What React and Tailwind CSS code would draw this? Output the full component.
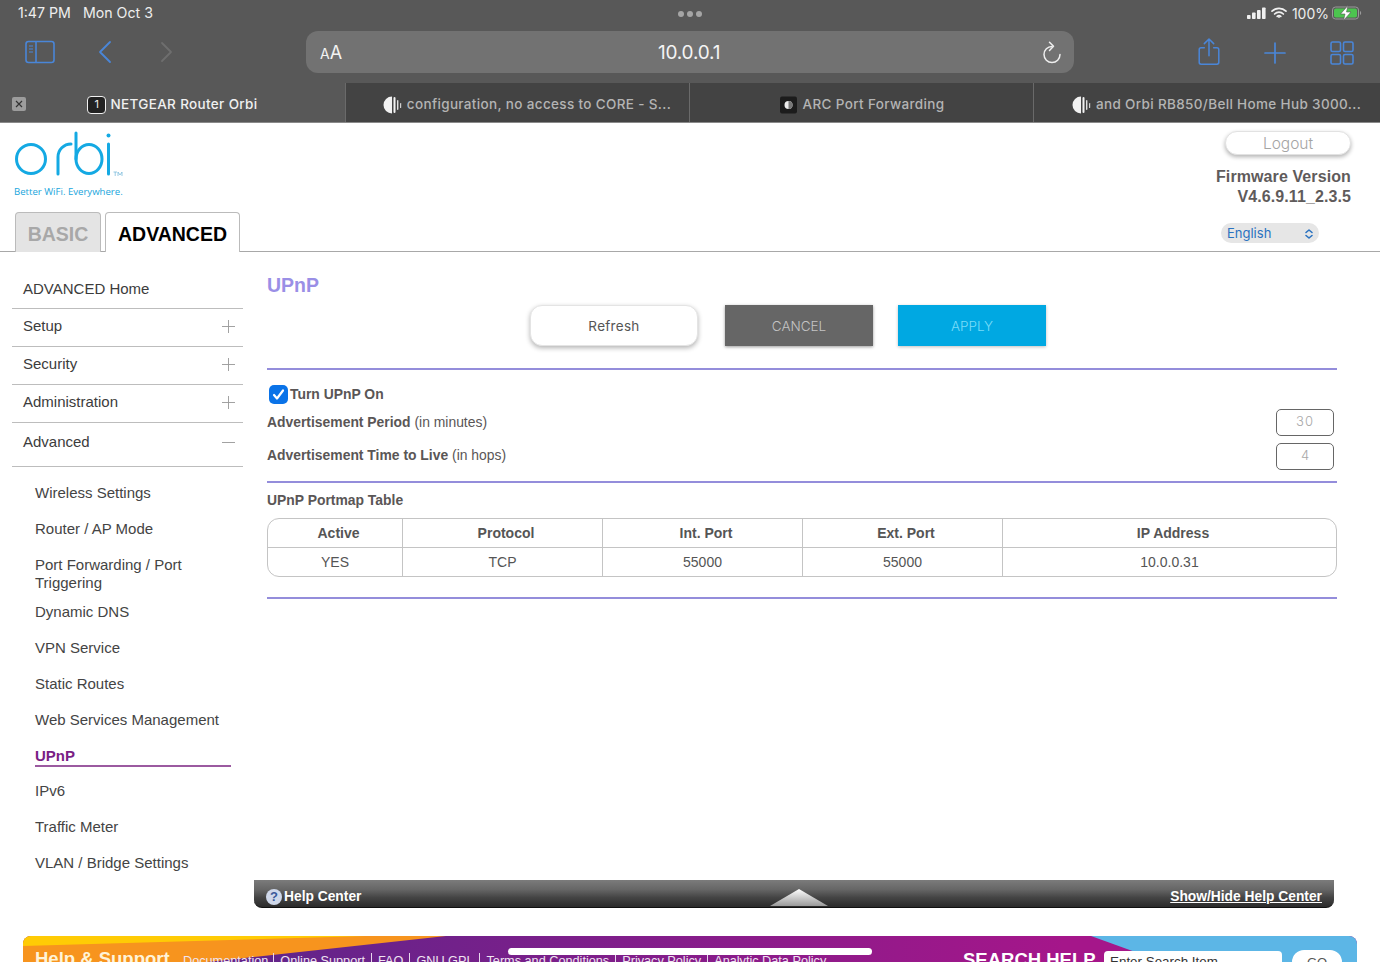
import React from "react";

const blue = "#4a86d8";

function Tab({ icon, children, active, shift, last }) {
  return (
    <div className={`flex items-center justify-center gap-[3px] h-full text-[13.5px] tracking-[0.35px] font-medium pt-[4px] ${last ? "flex-1" : active ? "w-[345px]" : "w-[344px]"} ${shift ? "pl-[19px]" : ""} ${active ? "text-[#f0f0f0]" : "bg-[#434343] text-[#b4b4b4] border-l border-[#6a6a6a]"}`}>
      {icon}
      <span className="whitespace-nowrap">{children}</span>
    </div>
  );
}

const Wave = () => (
  <svg width="21" height="18" viewBox="0 0 21 18" className="shrink-0">
    <path d="M9 0.5a8.5 8.5 0 0 0 0 17z" fill="#f2f2f2" />
    <rect x="10.5" y="1" width="2" height="16" rx="1" fill="#f2f2f2" />
    <rect x="14" y="4" width="1.4" height="10" rx="0.7" fill="#e0e0e0" />
    <rect x="17" y="7" width="1.2" height="5" rx="0.6" fill="#cfcfcf" />
  </svg>
);

function Chrome() {
  return (
    <div className="h-[123px] bg-[#585858] flex flex-col border-b border-[#8a8a8a] font-['Inter',sans-serif]">
      <div className="h-[26px] flex items-center justify-between pl-[18px] pr-[18px] text-[14.2px] text-[#eeeeee] relative">
        <div className="flex gap-[12px]"><span>1:47 PM</span><span>Mon Oct 3</span></div>
        <div className="flex gap-[3px] absolute left-[678px] top-[11px]">
          <span className="w-[6px] h-[6px] rounded-full bg-[#a5a5a5]" />
          <span className="w-[6px] h-[6px] rounded-full bg-[#a5a5a5]" />
          <span className="w-[6px] h-[6px] rounded-full bg-[#a5a5a5]" />
        </div>
        <div className="flex items-center gap-[4px]">
          <svg width="20" height="12" viewBox="0 0 20 12">
            <rect x="0" y="8" width="3.6" height="4" rx="0.8" fill="#f0f0f0" />
            <rect x="5" y="5.5" width="3.6" height="6.5" rx="0.8" fill="#f0f0f0" />
            <rect x="10" y="3" width="3.6" height="9" rx="0.8" fill="#f0f0f0" />
            <rect x="15" y="0.5" width="3.6" height="11.5" rx="0.8" fill="#f0f0f0" />
          </svg>
          <svg width="16" height="12" viewBox="0 0 16 12" fill="none" stroke="#f0f0f0" strokeWidth="1.7" strokeLinecap="round">
            <path d="M1 4.2a10 10 0 0 1 14 0" />
            <path d="M3.6 7a6.2 6.2 0 0 1 8.8 0" />
            <circle cx="8" cy="10" r="0.9" fill="#f0f0f0" stroke="none" />
            <path d="M6.2 9.4a2.6 2.6 0 0 1 3.6 0" />
          </svg>
          <span className="text-[14px] ml-[1px]">100%</span>
          <svg width="30" height="16" viewBox="0 0 30 16" className="ml-[-1px]">
            <rect x="0.5" y="2" width="26" height="12" rx="3" fill="none" stroke="#9a9a9a" />
            <rect x="2" y="3.5" width="23" height="9" rx="1.8" fill="#4cc44f" />
            <path d="M28 6v4a2 2 0 0 0 1.2-2 2 2 0 0 0-1.2-2z" fill="#9a9a9a" />
            <path d="M16 0.5L8.5 9h4.5l-1.5 6.5L19 7h-4.5z" fill="#ffffff" stroke="#585858" strokeWidth="0.6" />
          </svg>
        </div>
      </div>
      <div className="h-[57px] flex items-center relative">
        <div className="w-[306px] flex items-center mt-[-5px]">
          <svg width="30" height="24" viewBox="0 0 30 24" fill="none" stroke={blue} strokeWidth="1.6" className="ml-[25px]">
            <rect x="1" y="1.5" width="28" height="21" rx="2.5" />
            <path d="M11 1.5v21" />
            <path d="M4 6h4M4 9h4M4 12h4" strokeWidth="1.2" />
          </svg>
          <svg width="14" height="24" viewBox="0 0 14 24" fill="none" stroke={blue} strokeWidth="1.8" strokeLinecap="round" strokeLinejoin="round" className="ml-[43px]">
            <path d="M12 2L2 12l10 10" />
          </svg>
          <svg width="14" height="24" viewBox="0 0 14 24" fill="none" stroke="#6e6e6e" strokeWidth="1.8" strokeLinecap="round" strokeLinejoin="round" className="ml-[47px]">
            <path d="M3 3l9 9-9 9" />
          </svg>
        </div>
        <div className="w-[768px] h-[42px] mt-[-6px] rounded-[12px] bg-[#727272] flex items-center justify-between pl-[14px] pr-[12px]">
          <span className="text-[#f2f2f2] leading-none mt-[3px]"><span className="text-[14px]">A</span><span className="text-[18px]">A</span></span>
          <span className="text-[#f4f4f4] text-[19px] absolute left-[658px] mt-[3px] tracking-[-0.2px]">10.0.0.1</span>
          <svg width="20" height="24" viewBox="0 0 20 24" fill="none" stroke="#eeeeee" strokeWidth="1.5" strokeLinecap="round" strokeLinejoin="round">
            <path d="M10 6.5a8 8 0 1 0 8 8" />
            <path d="M7.5 2.2L11.5 6.3 7.5 10.4" />
          </svg>
        </div>
        <div className="flex items-center mt-[-4px]">
          <svg width="24" height="28" viewBox="0 0 24 30" fill="none" stroke={blue} strokeWidth="1.6" strokeLinecap="round" strokeLinejoin="round" className="ml-[123px] mt-[-1px]">
            <path d="M7 10.5H3.5a2 2 0 0 0-2 2V26a2 2 0 0 0 2 2h17a2 2 0 0 0 2-2V12.5a2 2 0 0 0-2-2H17" />
            <path d="M12 19V1.5M7 6l5-5 5 5" />
          </svg>
          <svg width="22" height="22" viewBox="0 0 22 22" fill="none" stroke={blue} strokeWidth="1.7" strokeLinecap="round" className="ml-[43px]">
            <path d="M11 1v20M1 11h20" />
          </svg>
          <svg width="24" height="24" viewBox="0 0 24 24" fill="none" stroke={blue} strokeWidth="1.6" className="ml-[44px]">
            <rect x="1" y="1" width="9.5" height="9.5" rx="1.5" />
            <rect x="13.5" y="1" width="9.5" height="9.5" rx="1.5" />
            <rect x="1" y="13.5" width="9.5" height="9.5" rx="1.5" />
            <rect x="13.5" y="13.5" width="9.5" height="9.5" rx="1.5" />
          </svg>
        </div>
      </div>
      <div className="flex-1 flex relative">
        <div className="absolute left-[12px] top-[14px] w-[14px] h-[14px] rounded-[2px] bg-[#9c9c9c] flex items-center justify-center">
          <svg width="8" height="8" viewBox="0 0 8 8" stroke="#333" strokeWidth="1.2"><path d="M1 1l6 6M7 1L1 7" /></svg>
        </div>
        <Tab active icon={<span className="w-[19px] h-[18px] rounded-[4px] border-[1.5px] border-[#f0f0f0] bg-[#222] text-[11px] flex items-center justify-center font-normal mr-[1px]">1</span>}>NETGEAR Router Orbi</Tab>
        <Tab shift icon={<Wave />}>configuration, no access to CORE - S...</Tab>
        <Tab icon={
          <svg width="20" height="18" viewBox="0 0 20 18" className="mr-[1px]">
            <rect x="1" y="0.5" width="17" height="17" rx="2" fill="#1c1c1c" />
            <circle cx="9.5" cy="9" r="4" fill="#eee" />
            <path d="M9.5 5a4 4 0 0 1 0 8z" fill="#777" />
          </svg>
        }>ARC Port Forwarding</Tab>
        <Tab last shift icon={<Wave />}>and Orbi RB850/Bell Home Hub 3000...</Tab>
      </div>
    </div>
  );
}

function Header() {
  return (
    <div className="h-[129px] border-b border-[#a8a8a8] flex justify-between font-['Liberation_Sans',sans-serif]">
      <div className="flex flex-col pl-[14px]">
        <svg width="112" height="54" viewBox="0 0 112 54" fill="none" stroke="#14a9e3" strokeWidth="3" className="mt-[7px]">
          <circle cx="17" cy="29" r="14.5" />
          <path d="M44 44V27a13 13 0 0 1 13-13" strokeLinecap="round" />
          <ellipse cx="75" cy="29" rx="13" ry="14.5" />
          <path d="M62 3v26" strokeLinecap="round" />
          <path d="M94.5 14v30" strokeLinecap="round" />
          <circle cx="94.5" cy="5.5" r="2" fill="#14a9e3" stroke="none" />
          <path d="M99.5 42h3.5M101.2 42v4M104 46v-4l2 3 2-3v4" strokeWidth="0.7" stroke="#6fb5d8" />
        </svg>
        <div className="text-[9.6px] text-[#20a5dc] mt-[1px] leading-[14px] font-['Open_Sans',sans-serif]">Better WiFi. Everywhere.</div>
        <div className="flex gap-[4px] mt-auto items-end mb-[-1px]">
          <div className="w-[86px] h-[40px] ml-[1px] pt-[4px] rounded-t-[4px] border border-b-0 border-[#bbbbbb] bg-[#e4e4e4] text-[#a8a8a8] text-[19.5px] font-bold flex items-center justify-center">BASIC</div>
          <div className="w-[135px] h-[40px] pt-[4px] rounded-t-[4px] border border-b-0 border-[#bbbbbb] bg-white text-[#000] text-[19.5px] font-bold flex items-center justify-center relative z-10">ADVANCED</div>
        </div>
      </div>
      <div className="flex flex-col items-end pr-[29px]">
        <div className="mt-[8px] pt-[2px] w-[126px] h-[24px] rounded-full bg-white border border-[#e2e2e2] shadow-[0_2px_4px_rgba(0,0,0,0.3)] text-[#a4a4a4] text-[15.5px] flex items-center justify-center font-['Inter',sans-serif] font-light">Logout</div>
        <div className="text-[#5f5b5b] text-[16px] tracking-[0.1px] font-bold text-right leading-[20px] mt-[12px]">
          <div>Firmware Version</div>
          <div>V4.6.9.11_2.3.5</div>
        </div>
        <div className="w-[98px] h-[20px] pt-[1px] mt-[16px] mr-[32px] rounded-full bg-[#e6e6e6] text-[#2a72c0] text-[13px] flex items-center justify-between pl-[6px] pr-[5px] font-['Inter',sans-serif]">
          <span>English</span>
          <svg width="10" height="12" viewBox="0 0 10 12" fill="none" stroke="#2a72c0" strokeWidth="1.6" strokeLinecap="round" strokeLinejoin="round">
            <path d="M2 4.5L5 2l3 2.5M2 7.5L5 10l3-2.5" />
          </svg>
        </div>
      </div>
    </div>
  );
}

function Plus({ minus }) {
  return (
    <svg width="13" height="13" viewBox="0 0 14 14" stroke="#9a9a9a" strokeWidth="1">
      <path d="M0 7h14" />
      {!minus && <path d="M7 0v14" />}
    </svg>
  );
}

function Top({ label, h, minus, icon = true, pb = 2 }) {
  return (
    <div style={{ height: h, paddingBottom: pb }} className="flex items-center justify-between border-b border-[#bdbdbd] pl-[11px] pr-[8px] text-[15px] text-[#3c3c3c]">
      <span>{label}</span>
      {icon && <Plus minus={minus} />}
    </div>
  );
}

function Sidebar() {
  const subs = ["Wireless Settings", "Router / AP Mode"];
  const subs2 = ["Dynamic DNS", "VPN Service", "Static Routes", "Web Services Management"];
  const subs3 = ["IPv6", "Traffic Meter", "VLAN / Bridge Settings"];
  const Sub = ({ t }) => <div className="h-[36px] flex items-center">{t}</div>;
  return (
    <div className="w-[243px] ml-[12px] shrink-0 font-['Liberation_Sans',sans-serif]">
      <div className="h-[20px]" />
      <div className="w-[231px]">
        <Top label="ADVANCED Home" h={37} icon={false} pb={1} />
        <Top label="Setup" h={38} />
        <Top label="Security" h={38} />
        <Top label="Administration" h={38} />
        <Top label="Advanced" h={44} minus pb={4} />
      </div>
      <div className="pl-[23px] pt-[8px] text-[15px] text-[#444444]">
        {subs.map((t) => <Sub key={t} t={t} />)}
        <div className="leading-[18px] pt-[9px] pb-[2px] w-[190px]">Port Forwarding / Port Triggering</div>
        {subs2.map((t) => <Sub key={t} t={t} />)}
        <div className="h-[35px] flex items-start">
          <div className="w-[196px] h-[29px] border-b-2 border-[#9b5aa0] text-[#7a1e85] font-bold flex items-center pt-[10px]">UPnP</div>
        </div>
        {subs3.map((t) => <Sub key={t} t={t} />)}
      </div>
    </div>
  );
}

const Divider = () => <div className="h-[2px] bg-[#948ddb]" />;

function Main() {
  const head = ["Active", "Protocol", "Int. Port", "Ext. Port", "IP Address"];
  const row = ["YES", "TCP", "55000", "55000", "10.0.0.31"];
  return (
    <div className="flex-1 ml-[12px] mr-[43px] font-['Liberation_Sans',sans-serif]">
      <div className="text-[#9a8fe6] text-[19.5px] font-bold leading-[24px] mt-[21px]">UPnP</div>
      <div className="flex mt-[8px] ml-[263px] h-[41px] font-['Inter',sans-serif] text-[13.5px]">
        <div className="w-[168px] pt-[1px] rounded-[12px] bg-white border border-[#e4e4e4] shadow-[0_2px_5px_rgba(0,0,0,0.3)] text-[#555] flex items-center justify-center tracking-[0.3px]">Refresh</div>
        <div className="w-[148px] pt-[1px] ml-[27px] bg-[#666666] shadow-[0_1px_3px_rgba(0,0,0,0.4)] text-[#c4c4c4] font-light flex items-center justify-center">CANCEL</div>
        <div className="w-[148px] pt-[1px] ml-[25px] bg-[#00a8e2] shadow-[0_1px_3px_rgba(0,0,0,0.25)] text-[#7adcf8] font-light flex items-center justify-center">APPLY</div>
      </div>
      <div className="mt-[22px]"><Divider /></div>
      <div className="h-[111px] relative text-[13.9px] text-[#5a5656]">
        <div className="flex items-center pt-[13px] h-[36px]">
          <span className="ml-[2px] w-[19px] h-[19px] rounded-[5px] bg-[#0a73e8] flex items-center justify-center">
            <svg width="13" height="13" viewBox="0 0 13 13" fill="none" stroke="#fff" strokeWidth="2.2" strokeLinecap="round" strokeLinejoin="round"><path d="M2 7l3 3.5L11 2.5" /></svg>
          </span>
          <span className="font-bold ml-[2px]">Turn UPnP On</span>
        </div>
        <div className="flex items-center justify-between h-[30px] pr-[3px] mt-[1px]">
          <span><b>Advertisement Period</b> (in minutes)</span>
          <span className="w-[58px] h-[27px] rounded-[5px] border border-[#666] flex items-center justify-center text-[#a8a8a8] text-[13px] font-['Inter',sans-serif] font-light tracking-[1px]">30</span>
        </div>
        <div className="flex items-center justify-between h-[38px] pr-[3px]">
          <span className="mb-[1px]"><b>Advertisement Time to Live</b> (in hops)</span>
          <span className="w-[58px] h-[27px] rounded-[5px] border border-[#666] flex items-center justify-center text-[#a8a8a8] text-[13px] font-['Inter',sans-serif] font-light">4</span>
        </div>
      </div>
      <Divider />
      <div className="text-[13.9px] font-bold text-[#5a5656] leading-[18px] mt-[8px]">UPnP Portmap Table</div>
      <div className="mt-[9px] border border-[#c4c4c4] rounded-[12px] overflow-hidden grid grid-cols-[135px_200px_200px_200px_1fr] text-[14px] text-[#555]">
        {head.map((h, i) => (
          <div key={h} className={`h-[29px] pl-[7px] flex items-center justify-center font-bold border-b border-[#c4c4c4] ${i < 4 ? "border-r" : ""}`}>{h}</div>
        ))}
        {row.map((r, i) => (
          <div key={i} className={`h-[28px] flex items-center justify-center border-[#c4c4c4] ${i < 4 ? "border-r" : ""}`}>{r}</div>
        ))}
      </div>
      <div className="mt-[20px]"><Divider /></div>
    </div>
  );
}

function HelpBar() {
  return (
    <div className="ml-[254px] mr-[46px] h-[28px] pt-[7px] rounded-b-[8px] border-b border-[#111] bg-[linear-gradient(#7b7b7b,#666_35%,#444_65%,#2b2b2b)] flex items-center justify-between pl-[12px] pr-[12px] relative font-['Liberation_Sans',sans-serif] text-[13.8px] font-bold text-white">
      <div className="flex items-center gap-[2px]">
        <span className="w-[16px] h-[16px] rounded-full bg-[#cfd8ea] text-[#3a5a9a] text-[13px] flex items-center justify-center">?</span>
        <span>Help Center</span>
      </div>
      <svg width="58" height="18" viewBox="0 0 58 18" className="absolute left-[516px] top-[9px]">
        <defs>
          <linearGradient id="tri" x1="0" y1="0" x2="0" y2="1">
            <stop offset="0" stopColor="#ffffff" />
            <stop offset="1" stopColor="#9a9a9a" />
          </linearGradient>
        </defs>
        <path d="M29 0L58 17H0z" fill="url(#tri)" />
      </svg>
      <span className="underline">Show/Hide Help Center</span>
    </div>
  );
}

function Footer() {
  return (
    <div className="mt-[28px] mx-[23px] h-[60px] rounded-t-[8px] overflow-hidden relative bg-[linear-gradient(90deg,#64248a_20%,#a5168a_78%)] font-['Liberation_Sans',sans-serif] text-white">
      <svg className="absolute inset-0" width="1334" height="60" viewBox="0 0 1334 60">
        <path d="M0 0H423L0 46z" fill="#f7941e" />
        <path d="M0 0H343L0 10z" fill="#ffcb05" />
        <path d="M1068 0H1334V60H1234z" fill="#5cb6e6" />
      </svg>
      <div className="relative flex items-start h-full">
        <span className="ml-[12px] mt-[11px] text-[18.5px] font-bold leading-[24px] text-[#fff3d8]">Help &amp; Support</span>
        <div className="absolute left-[160px] top-[17px] flex text-[12.7px] leading-[16px] text-[#f0e4f2]">
          {["Documentation", "Online Support", "FAQ", "GNU GPL", "Terms and Conditions", "Privacy Policy", "Analytic Data Policy"].map((t, i) => (
            <span key={t} className={i ? "border-l border-[#e8d8ee] pl-[6px] pr-[6px]" : "pr-[5px]"}>{t}</span>
          ))}
        </div>
        <span className="absolute left-[940px] top-[12px] text-[18.5px] font-bold leading-[24px]">SEARCH HELP</span>
        <div className="absolute left-[1081px] top-[15px] w-[178px] h-[30px] rounded-[4px] bg-white text-[#333] text-[13.4px] pl-[6px] pt-[1px]">Enter Search Item</div>
        <div className="absolute left-[1269px] top-[14px] w-[50px] h-[30px] rounded-[12px] bg-white text-[#555] text-[13px] flex justify-center pt-[3px]">GO</div>
      </div>
      <div className="absolute left-[485px] top-[12px] w-[364px] h-[7px] rounded-full bg-white" />
    </div>
  );
}

export default function App() {
  return (
    <div className="w-[1380px] h-[962px] overflow-hidden bg-white">
      <Chrome />
      <Header />
      <div className="flex h-[628px]">
        <Sidebar />
        <Main />
      </div>
      <HelpBar />
      <Footer />
    </div>
  );
}
